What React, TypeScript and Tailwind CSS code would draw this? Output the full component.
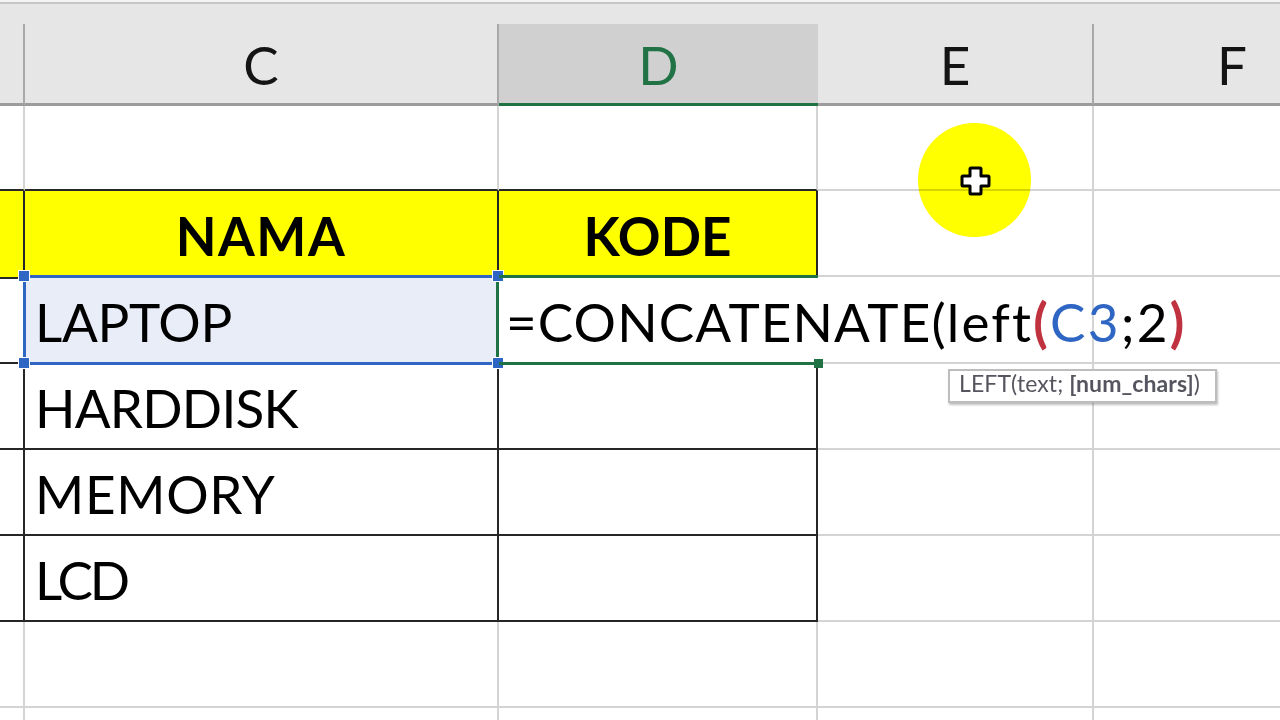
import React from "react";

const light = "border-[#d4d4d4]";
const dark = "border-[#262626]";
const font = { fontFamily: "Lato, 'Open Sans', sans-serif" };

function Handle({ className }: { className: string }) {
  return <span className={`absolute w-[10px] h-[10px] bg-[#2f66c4] outline outline-1 outline-white ${className}`} />;
}

function HeaderCell({ label, active, last }: { label: string; active?: boolean; last?: boolean }) {
  return (
    <div
      className={`flex items-center justify-center pt-[1px] border-b-[3px] text-[53px] leading-none ${
        active
          ? "bg-[#d0d0d0] border-b-[#1f7244] text-[#217346]"
          : "border-b-[#9c9c9c] text-[#141414]"
      } ${last ? "" : active ? "border-r-0" : "border-r-2 border-r-[#a8a8a8]"}`}
    >
      {label}
    </div>
  );
}

function DataRow({ text, tracking }: { text: string; tracking: string }) {
  return (
    <>
      <div className={`border-r-2 border-b-2 ${dark}`} />
      <div className={`flex items-center pl-[10px] pt-[2px] text-[53px] leading-none text-black border-r-2 border-b-2 ${dark} ${tracking}`}>{text}</div>
      <div className={`border-r-2 border-b-2 ${dark}`} />
      <div className={`border-r-2 border-b-2 ${light}`} />
      <div className={`border-b-2 ${light}`} />
    </>
  );
}

export default function App() {
  return (
    <div className="relative w-[1280px] h-[720px] overflow-hidden bg-white flex flex-col" style={font}>
      <div className="h-[2px] bg-[#f4f4f4]" />
      <div className="h-[22px] bg-[#e6e6e6] border-t-2 border-t-[#c6c6c6]" />

      <div className="grid grid-cols-[25px_474px_319px_276px_276px] h-[82px] bg-[#e6e6e6]">
        <div className="border-r-2 border-r-[#a8a8a8] border-b-[3px] border-b-[#9c9c9c]" />
        <HeaderCell label="C" />
        <HeaderCell label="D" active />
        <HeaderCell label="E" />
        <HeaderCell label="F" last />
      </div>

      <div className="grid grid-cols-[25px_474px_319px_276px_276px] grid-rows-[85px_86px_87px_86px_86px_86px_86px_1fr] flex-1">
        {/* row 2 */}
        <div className={`border-r-2 border-b-2 ${light} border-b-[#262626]`} />
        <div className={`border-r-2 border-b-2 ${light} border-b-[#262626]`} />
        <div className={`border-r-2 border-b-2 ${light} border-b-[#262626]`} />
        <div className={`border-r-2 border-b-2 ${light}`} />
        <div className={`border-b-2 ${light}`} />

        {/* row 3: yellow header */}
        <div className={`bg-[#ffff00] border-r-2 ${dark}`} />
        <div className={`flex items-center justify-center pt-[2px] bg-[#ffff00] border-r-2 font-bold text-[53px] leading-none tracking-[1.5px] text-black ${dark}`}>NAMA</div>
        <div className={`flex items-center justify-center pt-[2px] bg-[#ffff00] border-r-2 font-bold text-[53px] leading-none text-black ${dark}`}>KODE</div>
        <div className={`border-r-2 border-b-2 ${light}`} />
        <div className={`border-b-2 ${light}`} />

        {/* row 4: selected */}
        <div className={`border-r-2 border-y-2 ${dark}`} />
        <div className="relative -ml-[2px] -mt-[2px] -mb-px flex items-center pl-[9px] pt-[3px] text-[53px] leading-none tracking-[-0.3px] text-black bg-[#e8edf7] border-[3px] border-[#2f66c4] border-r-[#1f7244]">
          LAPTOP
          <Handle className="-left-[7px] -top-[7px]" />
          <Handle className="-right-[7px] -top-[7px]" />
          <Handle className="-left-[7px] -bottom-[6px]" />
          <Handle className="-right-[7px] -bottom-[6px]" />
        </div>
        <div className="relative -mt-[2px] -mb-px flex items-center pl-[7px] pt-[3px] whitespace-nowrap text-[53px] leading-none text-black border-y-[3px] border-y-[#1f7244]">
          <span>
            <span className="tracking-[1.1px]">=CONCATENATE(</span>
            <span className="tracking-[2.2px]">
              left<span className="font-bold text-[#c0323f]">(</span>
              <span className="text-[#2f66c4]">C3</span>;2<span className="font-bold text-[#c0323f]">)</span>
            </span>
          </span>
          <span className="absolute -right-[5px] -bottom-[6px] w-[9px] h-[9px] bg-[#1f7244]" />
        </div>
        <div className={`border-r-2 border-b-2 ${light}`} />
        <div className={`border-b-2 ${light}`} />

        <DataRow text="HARDDISK" tracking="tracking-[-0.75px]" />
        <DataRow text="MEMORY" tracking="tracking-[0.7px]" />
        <DataRow text="LCD" tracking="tracking-[-3px]" />

        {/* blank row */}
        <div className={`border-r-2 border-b-2 ${light}`} />
        <div className={`border-r-2 border-b-2 ${light}`} />
        <div className={`border-r-2 border-b-2 ${light}`} />
        <div className={`border-r-2 border-b-2 ${light}`} />
        <div className={`border-b-2 ${light}`} />

        <div className={`border-r-2 ${light}`} />
        <div className={`border-r-2 ${light}`} />
        <div className={`border-r-2 ${light}`} />
        <div className={`border-r-2 ${light}`} />
        <div />
      </div>

      {/* Function tooltip */}
      <div className="absolute left-[948px] top-[369px] w-[269px] h-[34px] flex items-center pl-[9px] pb-[5px] bg-white border-2 border-[#bdbdbd] shadow-[1px_2px_2px_rgba(0,0,0,0.25)] text-[23px] leading-none tracking-[0.1px] text-[#55555f] whitespace-nowrap">
        LEFT(text; <span className="font-bold ml-[6px]">[num_chars]</span>)
      </div>

      {/* Cursor highlight */}
      <div className="absolute left-[918px] top-[123px] w-[113px] h-[114px] rounded-full bg-[#ffff00] mix-blend-multiply" />
      <svg className="absolute left-[960px] top-[166px]" width="31" height="30" viewBox="0 0 31 30">
        <path
          d="M11 2h9a1 1 0 0 1 1 1v7h7a1 1 0 0 1 1 1v8a1 1 0 0 1-1 1h-7v7a1 1 0 0 1-1 1h-9a1 1 0 0 1-1-1v-7H3a1 1 0 0 1-1-1v-8a1 1 0 0 1 1-1h7V3a1 1 0 0 1 1-1z"
          fill="#fff"
          stroke="#000"
          strokeWidth="3"
          strokeLinejoin="round"
        />
      </svg>
    </div>
  );
}
